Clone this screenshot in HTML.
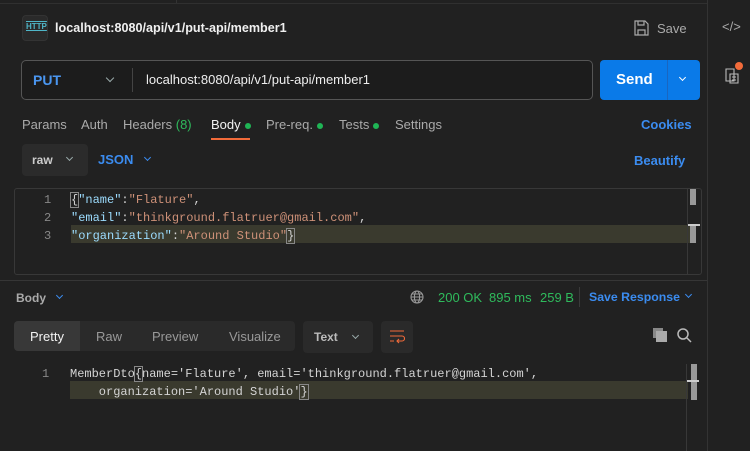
<!DOCTYPE html>
<html><head><style>
*{margin:0;padding:0;box-sizing:border-box}
body{width:750px;height:451px;background:#212121;font-family:"Liberation Sans",sans-serif;color:#e0e0e0;position:relative;overflow:hidden;font-size:13px}
.a{position:absolute;white-space:nowrap}
.mono{font-family:"Liberation Mono",monospace;font-size:12px}
.blue{color:#3b8cf0;font-weight:bold}
.grn{color:#2fba5c}
.dot{display:inline-block;width:6px;height:6px;border-radius:50%;background:#1fb555;margin-left:4px;vertical-align:middle}
.key{color:#9cdcfe}.str{color:#ce9178}.pl{color:#d4d4d4}
.chev{display:inline-block;width:6px;height:6px;border-right:1.3px solid #9aa;border-bottom:1.3px solid #9aa;transform:rotate(45deg)}
</style></head><body>
<div class="a" style="left:707px;top:0;width:1px;height:451px;background:#333"></div>
<div class="a" style="left:176px;top:0;width:1px;height:4px;background:#333"></div>
<div class="a" style="left:0;top:3px;width:707px;height:1px;background:#303030"></div>
<div class="a" style="left:22px;top:15px;width:26px;height:26px;border-radius:4px;background:#2a2a2a;border:1px solid #333"></div>
<div class="a" style="left:26px;top:22px;font-size:8px;color:#4fb6c8;font-weight:bold;text-decoration:underline overline">HTTP</div>
<div class="a" style="left:55px;top:21px;font-size:12.6px;font-weight:bold;color:#f0f0f0">localhost:8080/api/v1/put-api/member1</div>
<svg class="a" style="left:634px;top:20px" width="15" height="16" viewBox="0 0 15 16" fill="none" stroke="#aaa" stroke-width="1.2"><path d="M1 1h10l3 3v11H1z M4 1v4h6V1 M4 15v-5h7v5"/></svg>
<div class="a" style="left:657px;top:21px;color:#aaa;font-size:13px">Save</div>
<div class="a" style="left:722px;top:19px;color:#aaa;font-size:13px">&lt;/&gt;</div>
<svg class="a" style="left:724px;top:66px" width="16" height="18" viewBox="0 0 16 18" fill="none" stroke="#bbb" stroke-width="1.1"><path d="M2 3h8v12H2z M6 8h8v9H6z M8 11h4 M8 14h4"/></svg>
<div class="a" style="left:735px;top:62px;width:8px;height:8px;border-radius:50%;background:#f26b3a"></div>
<div class="a" style="left:21px;top:60px;width:572px;height:40px;border:1px solid #555;border-radius:5px;background:#1c1c1c"></div>
<div class="a" style="left:33px;top:72px;color:#4a96f0;font-weight:bold;font-size:14px">PUT</div>
<div class="a chev" style="left:107px;top:75px"></div>
<div class="a" style="left:132px;top:68px;width:1px;height:24px;background:#444"></div>
<div class="a" style="left:146px;top:72px;font-size:13px;color:#eee">localhost:8080/api/v1/put-api/member1</div>
<div class="a" style="left:600px;top:60px;width:100px;height:40px;border-radius:4px;background:#0a7ae8"></div>
<div class="a" style="left:667px;top:60px;width:1px;height:40px;background:#1a66c0"></div>
<div class="a" style="left:616px;top:71px;font-weight:bold;font-size:15px;color:#fff">Send</div>
<div class="a chev" style="left:680px;top:75px;border-color:#fff;width:5px;height:5px"></div>
<div class="a" style="left:22px;top:117px;color:#aaa">Params</div>
<div class="a" style="left:81px;top:117px;color:#aaa">Auth</div>
<div class="a" style="left:123px;top:117px;color:#aaa">Headers <span class="grn">(8)</span></div>
<div class="a" style="left:211px;top:117px;color:#f2f2f2">Body<span class="dot"></span></div>
<div class="a" style="left:211px;top:138px;width:39px;height:2px;background:#f26b3a"></div>
<div class="a" style="left:266px;top:117px;color:#aaa">Pre-req.<span class="dot"></span></div>
<div class="a" style="left:339px;top:117px;color:#aaa">Tests<span class="dot"></span></div>
<div class="a" style="left:395px;top:117px;color:#aaa">Settings</div>
<div class="a blue" style="left:641px;top:117px">Cookies</div>
<div class="a" style="left:22px;top:144px;width:66px;height:32px;border-radius:4px;background:#2b2b2b"></div>
<div class="a" style="left:32px;top:153px;color:#ccc;font-size:12px;font-weight:bold">raw</div>
<div class="a chev" style="left:67px;top:155px;width:5px;height:5px"></div>
<div class="a blue" style="left:98px;top:152px">JSON</div>
<div class="a chev" style="left:145px;top:155px;width:5px;height:5px;border-color:#3b8cf0"></div>
<div class="a blue" style="left:634px;top:153px">Beautify</div>
<div class="a" style="left:14px;top:188px;width:688px;height:87px;border:1px solid #383838;border-radius:3px"></div>
<div class="a" style="left:71px;top:225px;width:619px;height:18px;background:#3a3a2e"></div>
<div class="a" style="left:687px;top:188px;width:1px;height:87px;background:#383838"></div>
<div class="a" style="left:690px;top:189px;width:6px;height:16px;background:#999"></div>
<div class="a" style="left:690px;top:225px;width:6px;height:18px;background:#999"></div>
<div class="a" style="left:688px;top:224px;width:12px;height:2px;background:#ccc"></div>
<div class="a mono" style="left:44px;top:191px;color:#888;line-height:18px">1<br>2<br>3</div>
<div class="a mono" style="left:71px;top:191px;line-height:18px"><span class="pl" style="outline:1px solid #888">{</span><span class="key">"name"</span><span class="pl">:</span><span class="str">"Flature"</span><span class="pl">,</span><br><span class="key">"email"</span><span class="pl">:</span><span class="str">"thinkground.flatruer@gmail.com"</span><span class="pl">,</span><br><span class="key">"organization"</span><span class="pl">:</span><span class="str">"Around Studio"</span><span class="pl" style="outline:1px solid #888">}</span></div>
<div class="a" style="left:0;top:280px;width:707px;height:1px;background:#363636"></div>
<div class="a" style="left:16px;top:291px;color:#aaa;font-size:12px;font-weight:bold">Body</div>
<div class="a chev" style="left:57px;top:293px;width:5px;height:5px;border-color:#3b8cf0"></div>
<svg class="a" style="left:410px;top:290px" width="14" height="14" viewBox="0 0 14 14" fill="none" stroke="#999" stroke-width="1.1"><circle cx="7" cy="7" r="6"/><ellipse cx="7" cy="7" rx="2.6" ry="6"/><path d="M1 7h12M2 4h10M2 10h10"/></svg>
<div class="a grn" style="left:438px;top:290px">200 OK</div>
<div class="a grn" style="left:489px;top:290px">895 ms</div>
<div class="a grn" style="left:540px;top:290px">259 B</div>
<div class="a" style="left:579px;top:287px;width:1px;height:20px;background:#3a3a3a"></div>
<div class="a blue" style="left:589px;top:290px;font-size:12.3px">Save Response</div>
<div class="a chev" style="left:686px;top:292px;width:5px;height:5px;border-color:#3b8cf0"></div>
<div class="a" style="left:14px;top:321px;width:281px;height:30px;border-radius:4px;background:#2a2a2a"></div>
<div class="a" style="left:14px;top:321px;width:66px;height:30px;border-radius:4px 0 0 4px;background:#383838"></div>
<div class="a" style="left:30px;top:329px;color:#f2f2f2">Pretty</div>
<div class="a" style="left:96px;top:329px;color:#999">Raw</div>
<div class="a" style="left:152px;top:329px;color:#999">Preview</div>
<div class="a" style="left:229px;top:329px;color:#999">Visualize</div>
<div class="a" style="left:303px;top:321px;width:70px;height:32px;border-radius:4px;background:#2a2a2a"></div>
<div class="a" style="left:314px;top:330px;color:#bbb;font-size:12px;font-weight:bold">Text</div>
<div class="a chev" style="left:353px;top:333px;width:5px;height:5px"></div>
<div class="a" style="left:381px;top:321px;width:32px;height:32px;border-radius:4px;background:#2a2a2a"></div>
<svg class="a" style="left:389px;top:330px" width="16" height="14" viewBox="0 0 16 14" fill="none" stroke="#f26b3a" stroke-width="1.1"><path d="M1 1h14M1 6h12a2.5 2.5 0 0 1 0 5H8M10 9l-2 2 2 2M1 11h4"/></svg>
<svg class="a" style="left:653px;top:328px" width="14" height="14" viewBox="0 0 14 14"><rect x="0" y="0" width="10" height="10" fill="#888"/><rect x="3" y="3" width="11" height="11" fill="#aaa"/></svg>
<svg class="a" style="left:677px;top:328px" width="15" height="15" viewBox="0 0 15 15" fill="none" stroke="#bbb" stroke-width="1.5"><circle cx="6" cy="6" r="5"/><path d="M10 10l4 4"/></svg>
<div class="a" style="left:70px;top:381px;width:618px;height:18px;background:#3a3a2e"></div>
<div class="a" style="left:686px;top:364px;width:1px;height:87px;background:#383838"></div>
<div class="a" style="left:691px;top:364px;width:6px;height:36px;background:#999"></div>
<div class="a" style="left:687px;top:380px;width:12px;height:2px;background:#ccc"></div>
<div class="a mono" style="left:42px;top:365px;color:#888;line-height:18px">1</div>
<div class="a mono pl" style="left:70px;top:365px;line-height:18px">MemberDto<span style="outline:1px solid #888">{</span>name='Flature', email='thinkground.flatruer@gmail.com',<br>&nbsp;&nbsp;&nbsp;&nbsp;organization='Around Studio'<span style="outline:1px solid #888">}</span></div>
</body></html>
